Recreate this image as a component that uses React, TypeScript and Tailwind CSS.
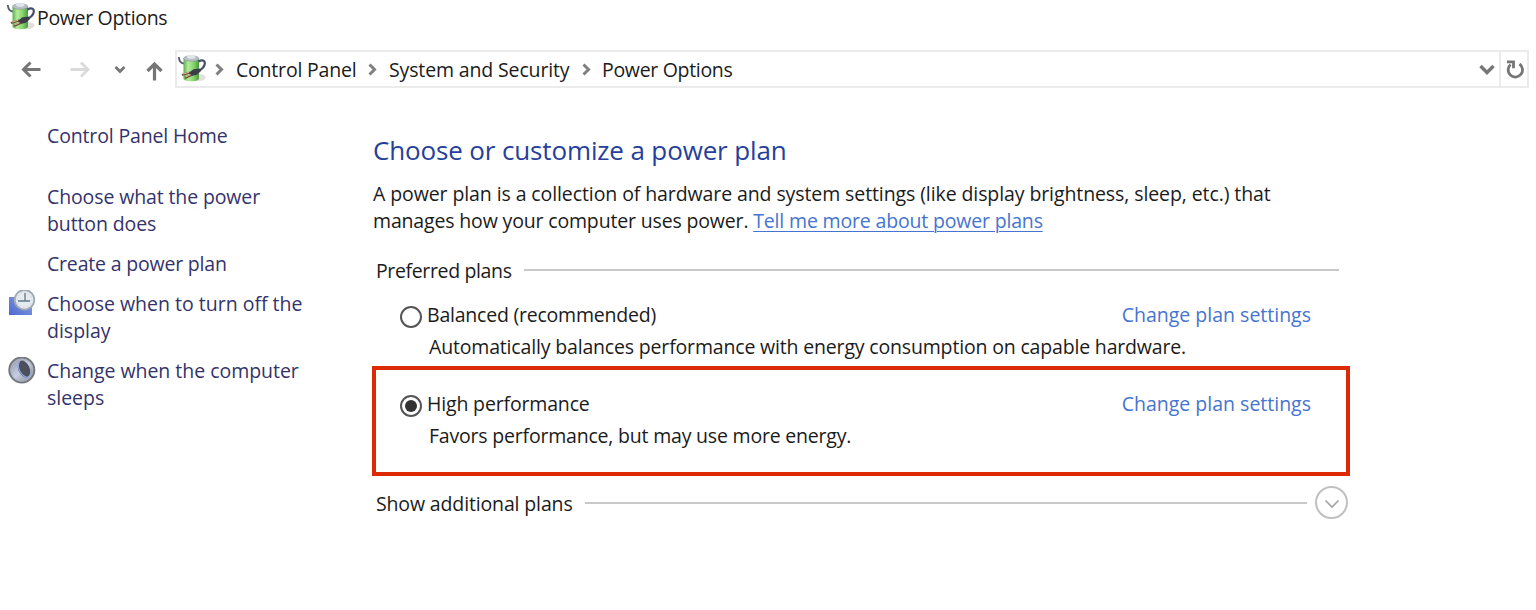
import type { ReactNode } from "react";
import clsx from "clsx";

const sidebarLinks = [
	{
		key: "button",
		lines: ["Choose what the power", "button does"],
		icon: null,
		tracking: "tracking-[-0.12px]",
	},
	{ key: "create", lines: ["Create a power plan"], icon: null, tracking: "tracking-[-0.19px]" },
	{
		key: "display",
		lines: ["Choose when to turn off the", "display"],
		icon: "clock",
		tracking: "tracking-normal",
	},
	{
		key: "sleep",
		lines: ["Change when the computer", "sleeps"],
		icon: "moon",
		tracking: "tracking-[-0.03px]",
	},
];

function BatteryIcon() {
	return (
		<svg width="28" height="30" viewBox="0 0 28 30" fill="none" aria-hidden="true">
			<defs>
				<linearGradient id="cell" x1="0" x2="1">
					<stop offset="0" stopColor="#5fae4c" />
					<stop offset="0.3" stopColor="#b4ec9d" />
					<stop offset="0.65" stopColor="#86d46e" />
					<stop offset="1" stopColor="#4c9a3d" />
				</linearGradient>
			</defs>
			<ellipse cx="21" cy="23.500" rx="6.500" ry="3.500" fill="#e2dfdd" />
			<path d="M.8 3c.3 4 1.700 6.500 5.500 6.500" stroke="#565b78" strokeWidth="1.800" />
			<path d="M5.500 4.500v20c0 3.700 15.500 3.700 15.500 0v-20z" fill="url(#cell)" />
			<ellipse cx="13.200" cy="4.500" rx="7.700" ry="2.800" fill="#b9c0c5" stroke="#8b9397" strokeWidth=".6" />
			<ellipse cx="13.200" cy="2.800" rx="4.300" ry="2" fill="#dfe5ea" />
			<path d="M20.500 7.500c4.500-2.500 7.500-.5 5.800 4-.6 1.700-1.800 2.800-3.300 4" stroke="#454a70" strokeWidth="2.200" />
			<path d="M10.500 19l5-3.800 7-.7 1 2-4.500 4.200-5.500 1.300z" fill="#3b3c49" />
			<path d="M12 18.500l-8 2.500M13.500 21l-6.500 3" stroke="#6b4c37" strokeWidth="2" />
			<path d="M11 18.300l-6 1.900M12.500 20.800l-5 2.300" stroke="#dfb795" strokeWidth="1" />
		</svg>
	);
}

function ClockIcon() {
	return (
		<svg width="28" height="27" viewBox="0 0 28 27" fill="none" aria-hidden="true">
			<defs>
				<linearGradient id="screen" x1="0" y1="1" x2="1" y2="0">
					<stop offset="0" stopColor="#4f68cc" />
					<stop offset="1" stopColor="#8ba4ec" />
				</linearGradient>
			</defs>
			<path d="M1 7h23v18H1z" fill="url(#screen)" />
			<circle cx="16.500" cy="9.800" r="9.800" fill="#e4eaed" stroke="#a0abb5" strokeWidth="1.800" />
			<circle cx="16.500" cy="9.800" r="7.300" stroke="#c4cdd3" strokeDasharray="1 2.820" />
			<path d="M17 3v8h-7M17 11h5" stroke="#60758b" strokeWidth="1.300" />
		</svg>
	);
}

function MoonIcon() {
	return (
		<svg width="28" height="28" viewBox="0 0 28 28" fill="none" aria-hidden="true">
			<defs>
				<linearGradient id="dusk" x1="0" y1="0" x2="1" y2="1">
					<stop offset="0" stopColor="#8c909c" />
					<stop offset=".5" stopColor="#c6cee4" />
					<stop offset="1" stopColor="#7b808c" />
				</linearGradient>
			</defs>
			<circle cx="13.800" cy="13" r="12.500" fill="url(#dusk)" stroke="#74777d" strokeWidth="2" />
			<circle cx="13.800" cy="13" r="11" stroke="#aeb2bb" strokeWidth=".8" />
			<ellipse cx="16" cy="12" rx="5.600" ry="8.800" transform="rotate(-24 16 12)" fill="#4d505a" />
			<path d="M11.500 4.500c-3 6 1 14 8 16 3-1.500 4.500-5 4-9" stroke="#8fa9e4" strokeWidth="1.100" />
		</svg>
	);
}

function Separator() {
	return (
		<svg width="10" height="13" viewBox="0 0 10 13" fill="none" aria-hidden="true">
			<path d="M1.500 1.500l5 5-5 5" stroke="#808080" strokeWidth="3" />
		</svg>
	);
}

function Radio({ checked = false }: { checked?: boolean }) {
	return (
		<span className="mt-[3px] flex size-[22px] shrink-0 items-center justify-center rounded-full border-2 border-[#555] bg-white">
			{checked && <span className="size-3 rounded-full bg-[#333]" />}
		</span>
	);
}

function Plan({
	name,
	nameClass,
	description,
	descriptionClass,
	linkClass,
	checked,
}: {
	name: string;
	nameClass: string;
	description: string;
	descriptionClass: string;
	linkClass: string;
	checked?: boolean;
}) {
	return (
		<div className="whitespace-nowrap">
			<div className="flex h-8 items-center">
				<Radio checked={checked} />
				<span className={clsx("mb-[2px] ml-[5px]", nameClass)}>{name}</span>
				<a className={clsx("mb-[2px] ml-auto text-[#4674d0]", linkClass)}>Change plan settings</a>
			</div>
			<p className={clsx("ml-[29px] h-8 leading-8", descriptionClass)}>{description}</p>
		</div>
	);
}

function Rule({ children }: { children: ReactNode }) {
	return (
		<div className="flex items-center whitespace-nowrap">
			{children}
			<span className="mb-[2px] h-[2px] flex-1 bg-[#c8c8c8]" />
		</div>
	);
}

export default function App() {
	return (
		<div className="h-[610px] w-[1536px] overflow-hidden bg-white font-['Open_Sans','Noto_Sans',sans-serif] text-[19.5px] leading-[27px] text-[#1b1b1b]">
			<header className="flex h-[50px] items-start pl-[7px]">
				<div className="mt-[2px]">
					<BatteryIcon />
				</div>
				<h1 className="mt-[4px] ml-[2px] tracking-[-0.33px] whitespace-nowrap">Power Options</h1>
			</header>

			<nav className="flex h-[38px] items-center pr-[7px]">
				<div className="flex h-full w-[175px] shrink-0 items-center">
					<svg width="175" height="38" viewBox="0 0 175 38" fill="none" aria-hidden="true">
						<path d="M40.500 19.500H23.500M30.500 12.500l-7 7 7 7" stroke="#767676" strokeWidth="3" />
						<path d="M70.500 19.500H88M81 12.500l7 7-7 7" stroke="#dadada" strokeWidth="2.800" />
						<path d="M115.500 17l4.500 4.500 4.500-4.500" stroke="#767676" strokeWidth="2.800" />
						<path d="M154.500 30.500V14M147.500 21l7-7 7 7" stroke="#767676" strokeWidth="3.200" />
					</svg>
				</div>
				<div className="flex h-full flex-1 items-center border-2 border-[#ebebeb] whitespace-nowrap">
					<div className="ml-[1px] flex w-[37px]">
						<BatteryIcon />
					</div>
					<Separator />
					<span className="ml-[11px] w-[132px] tracking-[-0.2px]">Control Panel</span>
					<Separator />
					<span className="ml-[11px] w-[193px] tracking-[-0.14px]">System and Security</span>
					<Separator />
					<span className="ml-[10px] tracking-[-0.31px]">Power Options</span>
					<svg className="mt-[2px] mr-[3px] ml-auto" width="18" height="12" viewBox="0 0 18 12" fill="none" aria-hidden="true">
						<path d="M2.500 2l6.500 6.500L15.500 2" stroke="#767676" strokeWidth="3.400" />
					</svg>
					<div className="flex h-full w-[28px] items-center justify-center border-l-2 border-[#ebebeb]">
						<svg width="20" height="22" viewBox="0 0 20 22" fill="none" aria-hidden="true">
							<path d="M15.500 6A7.200 7.200 0 1 1 6.500 6.500" stroke="#767676" strokeWidth="2.800" />
							<path d="M3 3.800h6.500v6.500" stroke="#767676" strokeWidth="2.800" />
						</svg>
					</div>
				</div>
			</nav>

			<div className="flex">
				<aside className="w-[373px] shrink-0 pt-[34px] text-[#34336b]">
					<a className="ml-[47px] block tracking-[-0.15px] whitespace-nowrap">Control Panel Home</a>
					<ul className="mt-[34px] flex flex-col gap-[13px]">
						{sidebarLinks.map((link) => (
							<li key={link.key} className="flex">
								<span className="w-[47px] shrink-0 pl-[8px]">
									{link.icon === "clock" && <ClockIcon />}
									{link.icon === "moon" && <MoonIcon />}
								</span>
								<a className={clsx("whitespace-nowrap", link.tracking)}>
									{link.lines.map((line) => (
										<span key={line} className="block">
											{line}
										</span>
									))}
								</a>
							</li>
						))}
					</ul>
				</aside>

				<main className="w-[978px] pt-[44px]">
					<h2 className="text-[26px] leading-[36px] tracking-[-0.14px] whitespace-nowrap text-[#263f9c]">
						Choose or customize a power plan
					</h2>
					<p className="mt-[12px] whitespace-nowrap">
						<span className="block tracking-[-0.095px]">
							A power plan is a collection of hardware and system settings (like display brightness, sleep, etc.) that
						</span>
						<span className="block tracking-[-0.16px]">
							manages how your computer uses power.{" "}
							<a className="tracking-[-0.17px] text-[#4674d0] underline decoration-1 underline-offset-3">
								Tell me more about power plans
							</a>
						</span>
					</p>

					<div className="mt-[23px] mr-[12px] ml-[3px]">
						<Rule>
							<h3 className="mr-[12px] tracking-[-0.36px]">Preferred plans</h3>
						</Rule>
					</div>

					<div className="mt-[15px] pl-[27px]">
						<Plan
							name="Balanced (recommended)"
							nameClass="tracking-[-0.22px]"
							description="Automatically balances performance with energy consumption on capable hardware."
							descriptionClass="tracking-[-0.17px]"
							linkClass="mr-[40px]"
						/>
					</div>

					<div className="mt-[3px] -ml-[1px] h-[110px] w-[978px] border-4 border-[#dc2a05] pt-[18px] pl-[24px]">
						<Plan
							name="High performance"
							nameClass="tracking-[-0.16px]"
							description="Favors performance, but may use more energy."
							descriptionClass="tracking-[-0.2px]"
							linkClass="mr-[35px]"
							checked
						/>
					</div>

					<div className="mt-[10px] mr-[3px] ml-[3px] flex items-center">
						<div className="mt-[2px] flex-1">
							<Rule>
								<h3 className="mr-[12px] tracking-[-0.14px]">Show additional plans</h3>
							</Rule>
						</div>
						<button
							type="button"
							className="ml-[8px] flex size-[33px] items-center justify-center rounded-full border-2 border-[#c0c0c0]"
							aria-label="Show additional plans"
						>
							<svg className="mt-[2px]" width="16" height="10" viewBox="0 0 16 10" fill="none" aria-hidden="true">
								<path d="M1.500 1.500L8 8l6.500-6.500" stroke="#a5a5a5" strokeWidth="1.700" />
							</svg>
						</button>
					</div>
				</main>
			</div>
		</div>
	);
}
